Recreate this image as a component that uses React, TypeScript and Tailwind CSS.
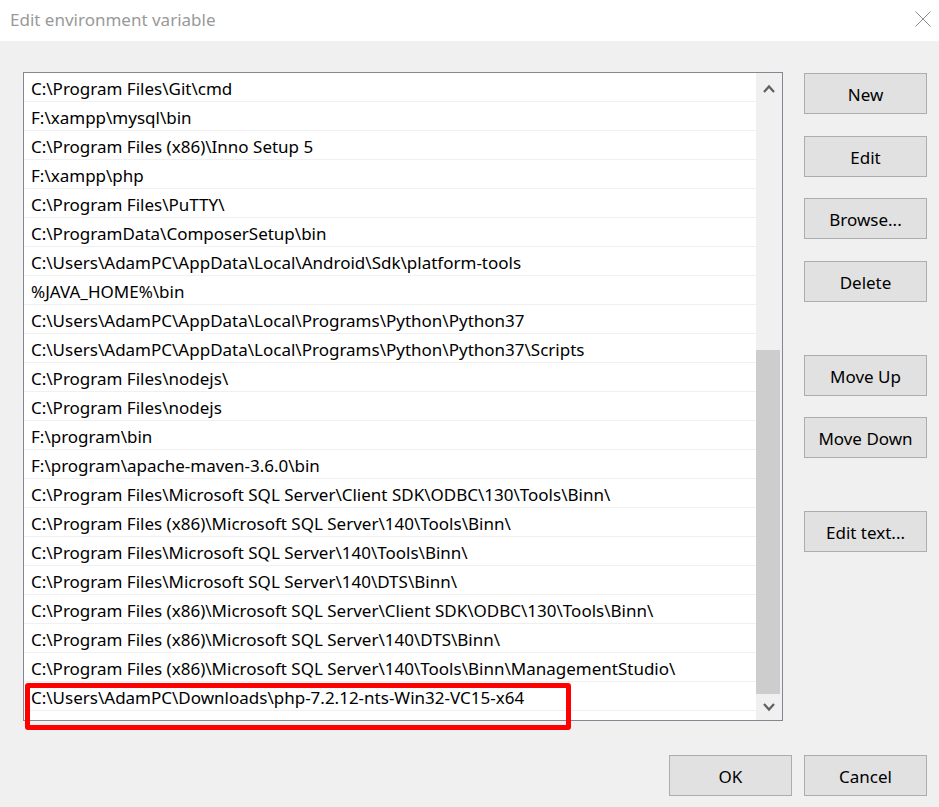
import React from 'react';

const paths = [
  'C:\\Program Files\\Git\\cmd',
  'F:\\xampp\\mysql\\bin',
  'C:\\Program Files (x86)\\Inno Setup 5',
  'F:\\xampp\\php',
  'C:\\Program Files\\PuTTY\\',
  'C:\\ProgramData\\ComposerSetup\\bin',
  'C:\\Users\\AdamPC\\AppData\\Local\\Android\\Sdk\\platform-tools',
  '%JAVA_HOME%\\bin',
  'C:\\Users\\AdamPC\\AppData\\Local\\Programs\\Python\\Python37',
  'C:\\Users\\AdamPC\\AppData\\Local\\Programs\\Python\\Python37\\Scripts',
  'C:\\Program Files\\nodejs\\',
  'C:\\Program Files\\nodejs',
  'F:\\program\\bin',
  'F:\\program\\apache-maven-3.6.0\\bin',
  'C:\\Program Files\\Microsoft SQL Server\\Client SDK\\ODBC\\130\\Tools\\Binn\\',
  'C:\\Program Files (x86)\\Microsoft SQL Server\\140\\Tools\\Binn\\',
  'C:\\Program Files\\Microsoft SQL Server\\140\\Tools\\Binn\\',
  'C:\\Program Files\\Microsoft SQL Server\\140\\DTS\\Binn\\',
  'C:\\Program Files (x86)\\Microsoft SQL Server\\Client SDK\\ODBC\\130\\Tools\\Binn\\',
  'C:\\Program Files (x86)\\Microsoft SQL Server\\140\\DTS\\Binn\\',
  'C:\\Program Files (x86)\\Microsoft SQL Server\\140\\Tools\\Binn\\ManagementStudio\\',
  'C:\\Users\\AdamPC\\Downloads\\php-7.2.12-nts-Win32-VC15-x64',
  '',
];

function DlgButton({ label, className = '' }: { label: string; className?: string }) {
  return (
    <button
      className={
        'flex h-[41px] w-[123px] items-center justify-center border border-[#adadad] bg-[#e1e1e1] pt-[2px] text-[17px] text-black ' +
        className
      }
    >
      {label}
    </button>
  );
}

function Chevron({ up }: { up?: boolean }) {
  return (
    <svg width="12" height="9" viewBox="0 0 12 9">
      <path
        d={up ? 'M1 8 L6 2.5 L11 8' : 'M1 1 L6 6.5 L11 1'}
        fill="none"
        stroke="#606060"
        strokeWidth="2.2"
      />
    </svg>
  );
}

export default function App() {
  return (
    <div className="flex h-[807px] w-[939px] flex-col overflow-hidden bg-[#f0f0f0] font-['Segoe_UI','Noto_Sans',sans-serif] text-black">
      {/* title bar */}
      <div className="flex h-[41px] shrink-0 items-center justify-between bg-white pl-[10px] pr-[8px]">
        <span className="pb-[1px] text-[17px] text-[#999999]">Edit environment variable</span>
        <svg width="16" height="16" viewBox="0 0 16 16" className="mb-[3px]">
          <path d="M0.5 0.5 L15.5 15.5 M15.5 0.5 L0.5 15.5" stroke="#8c8c8c" strokeWidth="1" />
        </svg>
      </div>

      {/* body */}
      <div className="flex pl-[23px] pt-[31px]">
        <div className="relative">
          <div className="flex h-[649px] w-[760px] overflow-hidden border border-[#828790] bg-white">
            <div className="flex-1 overflow-hidden">
              {paths.map((p, i) => (
                <div
                  key={i}
                  className="flex h-[29px] items-center border-b border-[#f0f0f0] pl-[7px] pt-[2px] text-[17px] leading-none whitespace-nowrap"
                >
                  {p}
                </div>
              ))}
            </div>
            <div className="flex w-[26px] flex-col bg-[#f0f0f0]">
              <div className="flex h-[26px] items-center justify-center pt-[4px]">
                <Chevron up />
              </div>
              <div className="flex-1" />
              <div className="h-[344px] w-[24px] bg-[#cdcdcd]" />
              <div className="flex h-[26px] items-center justify-center">
                <Chevron />
              </div>
            </div>
          </div>
          {/* highlight annotation */}
          <div className="absolute left-[2px] top-[611px] h-[47px] w-[546px] rounded-[3px] border-[5px] border-[#ff0000]" />
        </div>

        <div className="ml-[21px] mt-[1px] flex flex-col">
          <DlgButton label="New" />
          <DlgButton label="Edit" className="mt-[22px]" />
          <DlgButton label="Browse..." className="mt-[21px]" />
          <DlgButton label="Delete" className="mt-[22px]" />
          <DlgButton label="Move Up" className="mt-[53px]" />
          <DlgButton label="Move Down" className="mt-[21px]" />
          <DlgButton label="Edit text..." className="mt-[53px]" />
        </div>
      </div>

      {/* footer */}
      <div className="mt-[34px] flex justify-end gap-[12px] pr-[12px]">
        <DlgButton label="OK" />
        <DlgButton label="Cancel" />
      </div>
    </div>
  );
}
